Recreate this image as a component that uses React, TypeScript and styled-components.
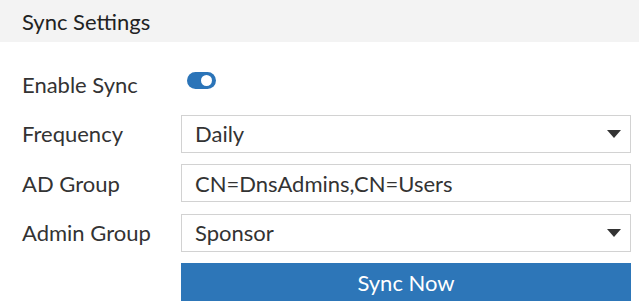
import React from "react";
import styled, { createGlobalStyle } from "styled-components";

const Global = createGlobalStyle`
  html, body { margin: 0; padding: 0; background: #fff; }
  body { font-family: Lato, "Open Sans", sans-serif; color: #333; }
  * { box-sizing: border-box; }
`;

const Page = styled.div`
  width: 639px;
  height: 308px;
  overflow: hidden;
`;

const Header = styled.div`
  height: 42px;
  background: #f3f3f3;
  padding-left: 22px;
  display: flex;
  align-items: center;
  font-size: 22px;
  color: #222;
`;

const Form = styled.div`
  display: grid;
  grid-template-columns: 159px 450px;
  grid-auto-rows: 38px;
  row-gap: 11.5px;
  padding: 23px 8px 0 22px;
`;

const Label = styled.div`
  display: flex;
  align-items: center;
  font-size: 22px;
  color: #333;
`;

const ToggleCell = styled.div`
  display: flex;
  align-items: center;
  padding-left: 6px;
  padding-bottom: 7px;
`;

const Toggle = styled.div<{ $on: boolean }>`
  width: 29px;
  height: 17px;
  border-radius: 9px;
  background: ${(p) => (p.$on ? "#2b74b8" : "#ccc")};
  position: relative;
  &::after {
    content: "";
    position: absolute;
    top: 3px;
    left: ${(p) => (p.$on ? "14px" : "3px")};
    width: 11px;
    height: 11px;
    border-radius: 50%;
    background: #fff;
  }
`;

const Field = styled.div`
  border: 1px solid #d2d2d2;
  display: flex;
  align-items: center;
  justify-content: space-between;
  padding: 0 9px 0 13px;
  font-size: 22px;
  color: #333;
`;

const Caret = styled.span`
  width: 0;
  height: 0;
  border-left: 7.5px solid transparent;
  border-right: 7.5px solid transparent;
  border-top: 8px solid #333;
`;

const Button = styled.button`
  grid-column: 2;
  border: none;
  background: #2d76b8;
  color: #fff;
  font-family: Lato, sans-serif;
  font-size: 22px;
  padding: 0;
  cursor: pointer;
`;

export default function App() {
  return (
    <Page>
      <Global />
      <Header>Sync Settings</Header>
      <Form>
        <Label>Enable Sync</Label>
        <ToggleCell>
          <Toggle $on />
        </ToggleCell>
        <Label>Frequency</Label>
        <Field>
          Daily
          <Caret />
        </Field>
        <Label>AD Group</Label>
        <Field>CN=DnsAdmins,CN=Users</Field>
        <Label>Admin Group</Label>
        <Field>
          Sponsor
          <Caret />
        </Field>
        <Button>Sync Now</Button>
      </Form>
    </Page>
  );
}
